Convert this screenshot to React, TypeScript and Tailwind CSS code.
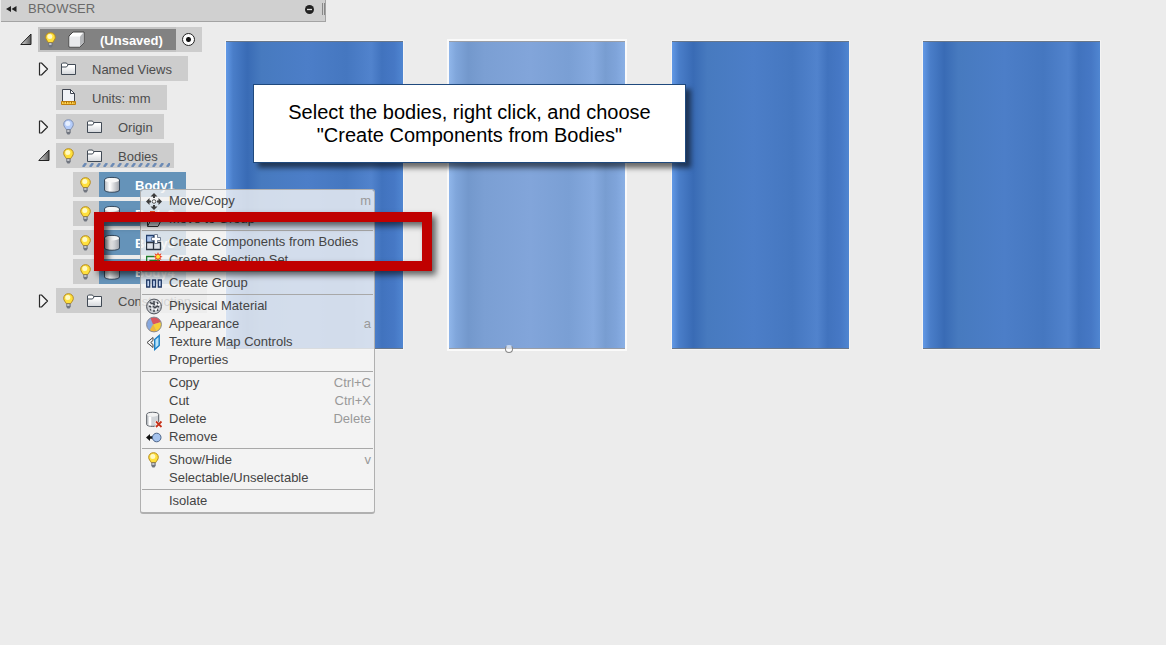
import type { ReactNode } from 'react';

function Bulb({ off = false }: { off?: boolean }) {
  return (
    <svg width="12" height="16" viewBox="0 0 12 16">
      <path
        d="M5.500.7C2.600.7.7 2.800.7 5.300c0 2.400 1.700 3.300 2.500 5.200h4.600c.8-1.900 2.500-2.800 2.500-5.200C10.300 2.800 8.400.7 5.500.7z"
        fill={off ? '#b4ccfa' : '#ffe03c'}
        stroke={off ? '#8292b4' : '#b58a1e'}
      />
      <circle cx="4.800" cy="4.500" r="2.500" fill={off ? '#e6efff' : '#fffac4'} />
      <path d="M3.300 10.500h4.400v3.200l-1.200 1.800h-2l-1.200-1.800z" fill="#70757f" />
      <path d="M4.200 12h2.300" stroke="#f0f0f0" strokeWidth="1.300" />
    </svg>
  );
}

function Folder() {
  return (
    <svg width="16" height="14" viewBox="0 0 16 14">
      <defs>
        <linearGradient id="folder" x2="0" y2="1">
          <stop offset=".3" stopColor="#fff" />
          <stop offset="1" stopColor="#d3d6da" />
        </linearGradient>
      </defs>
      <path d="M.5 12.500V2l1-1h4l1 1.500h8v10z" fill="url(#folder)" stroke="#414a55" strokeLinejoin="round" />
      <path d="M1 5h4.500l1.500-2" fill="none" stroke="#414a55" />
    </svg>
  );
}

function Ruler() {
  return (
    <svg width="16" height="17" viewBox="0 0 16 17">
      <path d="M1.500 12V.5h8l4 4V12" fill="#f0f2f6" stroke="#3f4550" />
      <path d="M9.500.5v4h4z" fill="#fff" stroke="#3f4550" />
      <path d="M.5 12.500h14v3H.5z" fill="#ffd44d" stroke="#c07f0c" />
      <path d="M3 12.500v2M5.500 12.500v2M8 12.500v2M10.500 12.500v2M13 12.500v2" stroke="#a86c08" />
    </svg>
  );
}

function Cube() {
  return (
    <svg width="18" height="17" viewBox="0 0 18 17">
      <path d="M1 5l4-4h11v11l-4 4H1z" fill="#fff" stroke="#444" strokeLinejoin="round" />
      <path d="M12 5.500l3.500-4V12L12 15.500z" fill="#b4b6b9" />
      <path d="M1.500 5.500H12v10H1.500z" fill="#e9eaec" />
    </svg>
  );
}

function Cylinder() {
  return (
    <svg width="18" height="18" viewBox="0 0 18 18">
      <defs>
        <linearGradient id="cyl">
          <stop offset="0" stopColor="#b4b8be" />
          <stop offset=".35" stopColor="#fff" />
          <stop offset="1" stopColor="#9da1a8" />
        </linearGradient>
      </defs>
      <path d="M1.500 4v10c0 3 15 3 15 0V4c0-3.500-15-3.500-15 0z" fill="url(#cyl)" stroke="#34485c" />
      <ellipse cx="9" cy="4.200" rx="6.800" ry="2.300" fill="#f7f7f7" />
    </svg>
  );
}

function MoveIcon() {
  return (
    <svg width="17" height="17" viewBox="0 0 17 17" fill="#3c3c3c">
      <path d="M8 0l3.500 3.500h-7zM8 17l3.500-3.500h-7zM0 8.500L3.500 5v7zM16 8.500L12.500 5v7z" />
      <path d="M8 3v2M8 12v2M3 8.500h2M11 8.500h2" stroke="#3c3c3c" strokeWidth="2" />
      <circle cx="8" cy="8.500" r="1.800" fill="#fff" stroke="#555" />
    </svg>
  );
}

function GroupFolderIcon() {
  return (
    <svg width="17" height="17" viewBox="0 0 17 17">
      <path d="M1.500 15V4h5l1.500 2h5v2.500" fill="#f0f0f0" stroke="#333" />
      <path d="M1.500 15.500l3.500-7h10.500l-3.500 7z" fill="#d6d8dc" stroke="#333" />
      <path d="M4 0h5v3H4z" fill="#e8562a" />
    </svg>
  );
}

function ComponentsIcon() {
  return (
    <svg width="17" height="17" viewBox="0 0 17 17">
      <path d="M.5 1.500h7v7h-7z" fill="#aac4ee" stroke="#24406e" strokeWidth="1.300" />
      <path d="M.5 8.500h7v7h-7zM7.500 8.500h7v7h-7z" fill="#dfe3ea" stroke="#2b3340" strokeWidth="1.300" />
      <path d="M8.500.5h3v3h3v3h-3v3h-3v-3h-3v-3h3z" fill="#fff" stroke="#5c6a80" strokeWidth=".8" />
    </svg>
  );
}

function SelectionIcon() {
  return (
    <svg width="17" height="17" viewBox="0 0 17 17">
      <path d="M.6 15.500V4.500h8M4 15.500V8.500h10" fill="none" stroke="#1e7d2c" strokeWidth="1.400" />
      <path d="M12 0l1 2.500 2.500-1.300-1.200 2.500 2.200 1-2.200 1L15.500 8 13 7l-1 2.500L11 7 8.500 8l1.200-2.300-2.200-1 2.200-1-1.200-2.500L11 2.500z" fill="#ee3b1c" />
      <circle cx="12" cy="4.700" r="2" fill="#ffe637" />
    </svg>
  );
}

function GroupIcon() {
  return (
    <svg width="17" height="9" viewBox="0 0 17 9">
      <path d="M.7 1h3v7h-3zM6.500 1h3v7h-3zM12.300 1h3v7h-3z" fill="#c4d6f3" stroke="#223a66" strokeWidth="1.300" />
    </svg>
  );
}

function MaterialIcon() {
  return (
    <svg width="17" height="17" viewBox="0 0 17 17">
      <circle cx="8" cy="8.500" r="7.400" fill="#c9ccd1" stroke="#4b4f57" />
      <path d="M4 4l2 2M8 3v3M11 4l1 2M3 8l2 1M7 8l2 2M11 8l2 1M4 12l2-1M8 12v2M11 11l1 2M6 5l3 2M9 10l2-2" fill="none" stroke="#43474f" strokeWidth="1.500" />
      <path d="M5 7l1 1M10 5v2M9 12l2-1M6 10v2M12 7l2-1M3 6l1 1" stroke="#fff" strokeWidth="1.400" />
    </svg>
  );
}

function AppearanceIcon() {
  return (
    <svg width="17" height="17" viewBox="0 0 17 17">
      <circle cx="8" cy="8.500" r="7.400" fill="#86a8df" />
      <path d="M7 8.500L4.500 2A7.400 7.400 0 0 1 15 6z" fill="#d9565e" />
      <path d="M7 8.500L15 6a7.400 7.400 0 0 1-4.500 9.500z" fill="#f8cf37" />
      <path d="M7 8.500l3.500 7A7.400 7.400 0 0 1 3.500 14.500z" fill="#f0b83a" />
      <circle cx="8" cy="8.500" r="7.400" fill="none" stroke="#8a8a94" />
    </svg>
  );
}

function TextureIcon() {
  return (
    <svg width="16" height="17" viewBox="0 0 16 17">
      <path d="M7 3.500L1 8.500l6 5v-3L4.700 8.500 7 6.500z" fill="#f5f5f5" stroke="#444" />
      <path d="M8.700 5.500l4.500-4v10l-4.500 4z" fill="#b5e3fa" stroke="#1b7fc4" strokeWidth="1.400" />
    </svg>
  );
}

function DeleteIcon() {
  return (
    <svg width="17" height="17" viewBox="0 0 17 17">
      <path d="M.7 3.500v10c0 2.500 12 2.500 12 0v-10c0-3-12-3-12 0z" fill="#d2d5d9" stroke="#555a61" />
      <path d="M4 5.500v9" stroke="#fff" strokeWidth="2.500" />
      <ellipse cx="6.700" cy="3.700" rx="5.500" ry="2" fill="#f3f3f3" />
      <path d="M9.500 10.500l6 6M15.500 10.500l-6 6" stroke="#fff" strokeWidth="3" />
      <path d="M10 10.500l5.500 5.500M15.500 10.500L10 16" stroke="#c5311a" strokeWidth="1.800" />
    </svg>
  );
}

function RemoveIcon() {
  return (
    <svg width="17" height="11" viewBox="0 0 17 11">
      <path d="M0 5.500L4 2v2.200h3v2.600H4V9z" fill="#111" />
      <circle cx="10.700" cy="5.500" r="4.300" fill="#a5c3ee" stroke="#4b6488" />
    </svg>
  );
}

type NodeProps = {
  label: string;
  icon: ReactNode;
  bulb?: 'on' | 'off';
  arrow?: 'open' | 'closed';
  body?: boolean;
  pad?: string;
  dashed?: boolean;
};

const nodes: NodeProps[] = [
  { label: 'Named Views', icon: <Folder />, arrow: 'closed' },
  { label: 'Units: mm', icon: <Ruler /> },
  { label: 'Origin', icon: <Folder />, arrow: 'closed', bulb: 'off', pad: 'pr-[11px]' },
  { label: 'Bodies', icon: <Folder />, arrow: 'open', bulb: 'on', dashed: true },
  { label: 'Body1', icon: <Cylinder />, bulb: 'on', body: true },
  { label: 'Body2', icon: <Cylinder />, bulb: 'on', body: true },
  { label: 'Body3', icon: <Cylinder />, bulb: 'on', body: true },
  { label: 'Body4', icon: <Cylinder />, bulb: 'on', body: true },
  { label: 'Construction', icon: <Folder />, arrow: 'closed', bulb: 'on' },
];

function Arrow({ kind, label }: { kind: 'open' | 'closed'; label: string }) {
  return (
    <button type="button" aria-label={`Toggle ${label}`} className="flex w-[18px] shrink-0 items-center">
      {kind === 'open' ? (
        <svg width="12" height="13" viewBox="0 0 12 13">
          <defs>
            <linearGradient id="corner">
              <stop offset="0" stopColor="#ddd" />
              <stop offset="1" stopColor="#5a5a5a" />
            </linearGradient>
          </defs>
          <path d="M11 1v10.500H.8z" fill="url(#corner)" stroke="#222" />
        </svg>
      ) : (
        <svg width="12" height="14" viewBox="0 0 12 14">
          <path d="M1.500 1v12h2L9.500 7l-6-6z" fill="#f4f4f4" stroke="#2a2a2a" strokeWidth="1.200" strokeLinejoin="round" />
        </svg>
      )}
    </button>
  );
}

function Slot({ children }: { children: ReactNode }) {
  return <span className="flex w-[26px] shrink-0 items-center justify-center">{children}</span>;
}

function TreeNode({ label, icon, bulb, arrow, body, pad = 'pr-4', dashed }: NodeProps) {
  return (
    <li className={`flex h-[25px] ${body ? 'pl-[55px]' : 'pl-[38px]'}`}>
      {arrow ? <Arrow kind={arrow} label={label} /> : <span className="w-[18px] shrink-0" />}
      <div className="relative flex bg-[#cdcdcd]">
        {bulb && (
          <Slot>
            <Bulb off={bulb === 'off'} />
          </Slot>
        )}
        <div className={`flex items-center ${body ? 'bg-[#6593b9] pr-[11px] font-bold text-white' : pad}`}>
          <Slot>{icon}</Slot>
          <span className="pt-[2px] pl-[10px]">{label}</span>
        </div>
        {dashed && (
          <svg className="absolute right-1 bottom-px left-[26px] h-1 w-[88px]">
            <defs>
              <pattern id="dash" width="7" height="4" patternUnits="userSpaceOnUse">
                <path d="M1 4L4 0" stroke="#6b8ab5" strokeWidth="2.500" />
              </pattern>
            </defs>
            <rect width="100%" height="4" fill="url(#dash)" />
          </svg>
        )}
      </div>
    </li>
  );
}

function Browser() {
  return (
    <aside className="text-[13px] leading-4 text-[#4c4c4c]">
      <header className="ml-px flex h-[22px] w-[325px] items-center border-r border-b border-[#a3a3a3] bg-[#d0d0d0] pb-[3px] pl-[5px]">
        <button type="button" aria-label="Collapse browser">
          <svg width="11" height="8" viewBox="0 0 11 8">
            <path d="M5 1v6L0 4zM10.500 1v6l-5-3z" fill="#222" />
          </svg>
        </button>
        <h1 className="flex-1 pl-[11px] text-[#6a6a6a]">BROWSER</h1>
        <button type="button" aria-label="Minimize" className="mr-2">
          <svg width="9" height="9" viewBox="0 0 9 9">
            <circle cx="4.500" cy="4.500" r="4.500" fill="#222" />
            <path d="M2 4.500h5" stroke="#ddd" strokeWidth="1.300" />
          </svg>
        </button>
        <span className="h-3 w-[3px] border-x border-[#888]" />
      </header>
      <ul className="flex flex-col gap-1 pt-[5px]">
        <li className="flex h-[25px] pl-5">
          <Arrow kind="open" label="(Unsaved)" />
          <div className="flex items-center bg-[#cdcdcd]">
            <div className="flex h-full items-center border-2 border-r-0 border-[#c4c4c4] bg-[#828282] pr-[13px] font-bold text-white">
              <span className="-ml-[2px] flex">
                <Slot>
                  <Bulb />
                </Slot>
                <Slot>
                  <Cube />
                </Slot>
              </span>
              <span className="pt-[2px] pl-[10px]">(Unsaved)</span>
            </div>
            <Slot>
              <input
                type="radio"
                defaultChecked
                aria-label="Activate component"
                className="size-[13px] appearance-none rounded-full border border-[#222] bg-white bg-[radial-gradient(circle,#111_2px,transparent_3px)]"
              />
            </Slot>
          </div>
        </li>
        {nodes.map((n) => (
          <TreeNode key={n.label} {...n} />
        ))}
      </ul>
    </aside>
  );
}

const bodies = [
  { left: 'left-[226px]', selected: false },
  { left: 'left-[449px]', selected: true },
  { left: 'left-[672px]', selected: false },
  { left: 'left-[923px]', selected: false },
];

function Canvas() {
  return (
    <div className="absolute inset-0 overflow-hidden">
      {bodies.map((b) => (
        <div
          key={b.left}
          className={`absolute top-[41px] h-[308px] border-y ${b.left} ${
            b.selected
              ? 'w-[176px] border-[#9a9ea6] bg-[linear-gradient(90deg,#90b6ea_0%,#80a6db_4%,#7398cc_11%,#7b9fd3_20%,#82a5da_46%,#7a9fd4_68%,#86aadf_82%,#789dd1_89%,#7fa4da_95%,#8ab0e5_100%)] shadow-[0_0_0_2px_#fafafa]'
              : 'w-[177px] border-[#697789] bg-[linear-gradient(90deg,#6299e6_0%,#4a7ec9_4%,#396bb5_12%,#477abf_20%,#4c7ec8_46%,#4577c0_68%,#5183cd_82%,#4173be_88%,#4678c5_95%,#5086d1_100%)] shadow-[0_0_0_1px_#f4f4f4]'
          }`}
        />
      ))}
      <span className="absolute top-[345px] left-[505px] size-2 rounded-full border border-[#888] border-t-transparent bg-white/60" />
    </div>
  );
}

type Item = { label: string; icon?: ReactNode; keys?: string };

const menu: Item[][] = [
  [
    { label: 'Move/Copy', icon: <MoveIcon />, keys: 'm' },
    { label: 'Move to Group', icon: <GroupFolderIcon /> },
  ],
  [
    { label: 'Create Components from Bodies', icon: <ComponentsIcon /> },
    { label: 'Create Selection Set', icon: <SelectionIcon /> },
  ],
  [{ label: 'Create Group', icon: <GroupIcon /> }],
  [
    { label: 'Physical Material', icon: <MaterialIcon /> },
    { label: 'Appearance', icon: <AppearanceIcon />, keys: 'a' },
    { label: 'Texture Map Controls', icon: <TextureIcon /> },
    { label: 'Properties' },
  ],
  [
    { label: 'Copy', keys: 'Ctrl+C' },
    { label: 'Cut', keys: 'Ctrl+X' },
    { label: 'Delete', icon: <DeleteIcon />, keys: 'Delete' },
    { label: 'Remove', icon: <RemoveIcon /> },
  ],
  [{ label: 'Show/Hide', icon: <Bulb />, keys: 'v' }, { label: 'Selectable/Unselectable' }],
  [{ label: 'Isolate' }],
];

function ContextMenu() {
  return (
    <div
      role="menu"
      className="absolute top-[189px] left-[140px] w-[235px] rounded-[3px] border border-b-2 border-[#b0b0b0] bg-[#f5f5f5]/80 bg-clip-padding pt-[2px] pb-[2px] text-[13px] leading-[18px] text-[#444]"
    >
      {menu.map((group, i) => (
        <div key={group[0].label} role="group">
          {i > 0 && <hr className="mx-px my-[2px] border-[#a8a8a8]" />}
          {group.map((item) => (
            <button key={item.label} type="button" role="menuitem" className="flex h-[18px] w-full items-center pr-[3px] text-left">
              <Slot>{item.icon}</Slot>
              <span className="flex-1 pl-[2px]">{item.label}</span>
              {item.keys && <kbd className="font-[inherit] text-[#999]">{item.keys}</kbd>}
            </button>
          ))}
        </div>
      ))}
    </div>
  );
}

export default function App() {
  return (
    <main className="relative min-h-screen bg-[#ececec] font-['Liberation_Sans',Arial,sans-serif]">
      <Canvas />
      <div className="relative">
        <Browser />
      </div>
      <ContextMenu />
      {/* highlight around the command to pick */}
      <div className="pointer-events-none absolute top-[212px] left-[94px] h-[59px] w-[338px] border-10 border-[#c00000] drop-shadow-[4px_4px_3px_rgba(0,0,0,0.6)]" />
      <p className="absolute top-[84px] left-[253px] w-[433px] border border-[#1f497d] bg-white pt-4 pb-[15px] text-center text-[20px] leading-[23px] text-black shadow-[5px_5px_5px_rgba(0,0,0,0.55)]">
        Select the bodies, right click, and choose
        <br />
        "Create Components from Bodies"
      </p>
    </main>
  );
}
